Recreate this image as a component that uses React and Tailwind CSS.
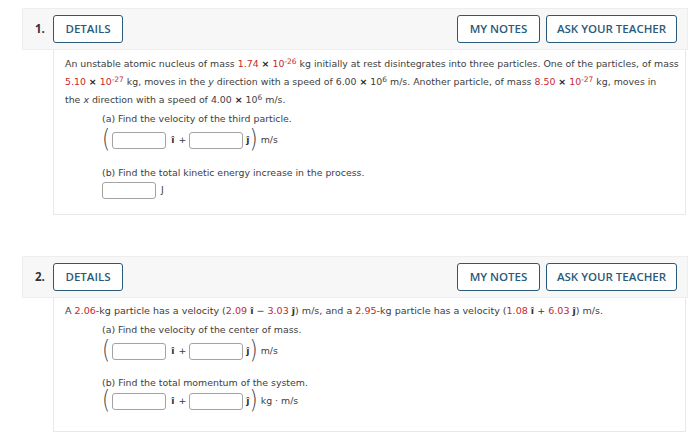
import React from "react";

const R = ({ children }) => <span className="text-[#c8272d]">{children}</span>;
const X = () => <span className="font-bold text-[#222]">×</span>;
const Sup = ({ children, red }) => (
  <sup className={"text-[7.5px] relative -top-[3px] " + (red ? "text-[#c8272d]" : "")}>{children}</sup>
);

function Btn({ children, className = "" }) {
  return (
    <div
      className={
        "h-[28px] flex items-center justify-center border-[1.5px] border-[#2a5878] rounded-[3px] bg-white text-[#2b5a7a] text-[11.5px] font-semibold font-['Open_Sans'] " +
        className
      }
    >
      {children}
    </div>
  );
}

function Header({ n }) {
  return (
    <div className="h-[42px] bg-[#f7f7f7] border border-[#ededed] flex items-center pl-[12px] pr-[10px]">
      <div className="w-[18px] text-[11.5px] font-bold text-[#333] font-['Open_Sans']">{n}.</div>
      <Btn className="w-[70px]">DETAILS</Btn>
      <div className="ml-auto flex gap-[6px]">
        <Btn className="w-[83px]">MY NOTES</Btn>
        <Btn className="w-[131px]">ASK YOUR TEACHER</Btn>
      </div>
    </div>
  );
}

const Box = ({ className = "" }) => (
  <div className={"w-[54px] h-[17px] border border-[#a3a3a3] rounded-[3px] bg-white " + className} />
);

const Paren = ({ c }) => (
  <span className="text-[21px] leading-none font-['DejaVu_Sans'] font-extralight text-[#444] scale-y-[1.15] inline-block -mt-[2px]">
    {c}
  </span>
);

function VecRow({ unit }) {
  return (
    <div className="flex items-center h-[22px] text-[#3d3d3d]">
      <Paren c="(" />
      <Box className="ml-[2px]" />
      <span className="font-bold text-[#333] ml-[5px]">î</span>
      <span className="ml-[4px]">+</span>
      <Box className="ml-[3px]" />
      <span className="font-bold text-[#333] ml-[3px]">ĵ</span>
      <Paren c=")" />
      <span className="ml-[3px]">{unit}</span>
    </div>
  );
}

export default function App() {
  return (
    <div className="w-[700px] h-[434px] bg-white pt-[8px] font-['DejaVu_Sans'] text-[9.4px] text-[#3d3d3d] overflow-hidden">
      {/* Card 1 */}
      <div className="ml-[22px] w-[666px]">
        <Header n={1} />
        <div className="ml-[31px] w-[633px] h-[165px] border-x border-b border-[#e8e8e8] pl-[11px] pr-[4px] pt-[5px]">
          <p className="leading-[18px]">
            An unstable atomic nucleus of mass <R>1.74</R> <X /> <R>10</R>
            <Sup red>-26</Sup> kg initially at rest disintegrates into three particles. One of the particles, of mass{" "}
            <R>5.10</R> <X /> <R>10</R>
            <Sup red>-27</Sup> kg, moves in the <i>y</i> direction with a speed of 6.00 <X /> 10<Sup>6</Sup> m/s. Another
            particle, of mass <R>8.50</R> <X /> <R>10</R>
            <Sup red>-27</Sup> kg, moves in
            <br />
            the <i>x</i> direction with a speed of 4.00 <X /> 10<Sup>6</Sup> m/s.
          </p>
          <div className="ml-[37px] mt-[1px]">
            <div className="leading-[18px]">(a) Find the velocity of the third particle.</div>
            <div className="mt-[1px]">
              <VecRow unit="m/s" />
            </div>
            <div className="leading-[16px] mt-[14px]">(b) Find the total kinetic energy increase in the process.</div>
            <div className="flex items-center mt-[1px]">
              <Box />
              <span className="ml-[5px]">J</span>
            </div>
          </div>
        </div>
      </div>

      {/* Card 2 */}
      <div className="ml-[22px] w-[666px] mt-[41px]">
        <Header n={2} />
        <div className="ml-[31px] w-[633px] h-[134px] border-x border-b border-[#e8e8e8] px-[11px] pt-[4px]">
          <p className="leading-[18px] text-[9.55px]">
            A <R>2.06</R>-kg particle has a velocity (<R>2.09</R> <b className="text-[#333]">î</b> − <R>3.03</R>{" "}
            <b className="text-[#333]">ĵ</b>) m/s, and a <R>2.95</R>-kg particle has a velocity (<R>1.08</R>{" "}
            <b className="text-[#333]">î</b> + <R>6.03</R> <b className="text-[#333]">ĵ</b>) m/s.
          </p>
          <div className="ml-[37px]">
            <div className="leading-[18px] mt-[1px]">(a) Find the velocity of the center of mass.</div>
            <div className="mt-[1px]">
              <VecRow unit="m/s" />
            </div>
            <div className="leading-[18px] mt-[12px]">(b) Find the total momentum of the system.</div>
            <div className="-mt-[2px]">
              <VecRow unit="kg · m/s" />
            </div>
          </div>
        </div>
      </div>
    </div>
  );
}
